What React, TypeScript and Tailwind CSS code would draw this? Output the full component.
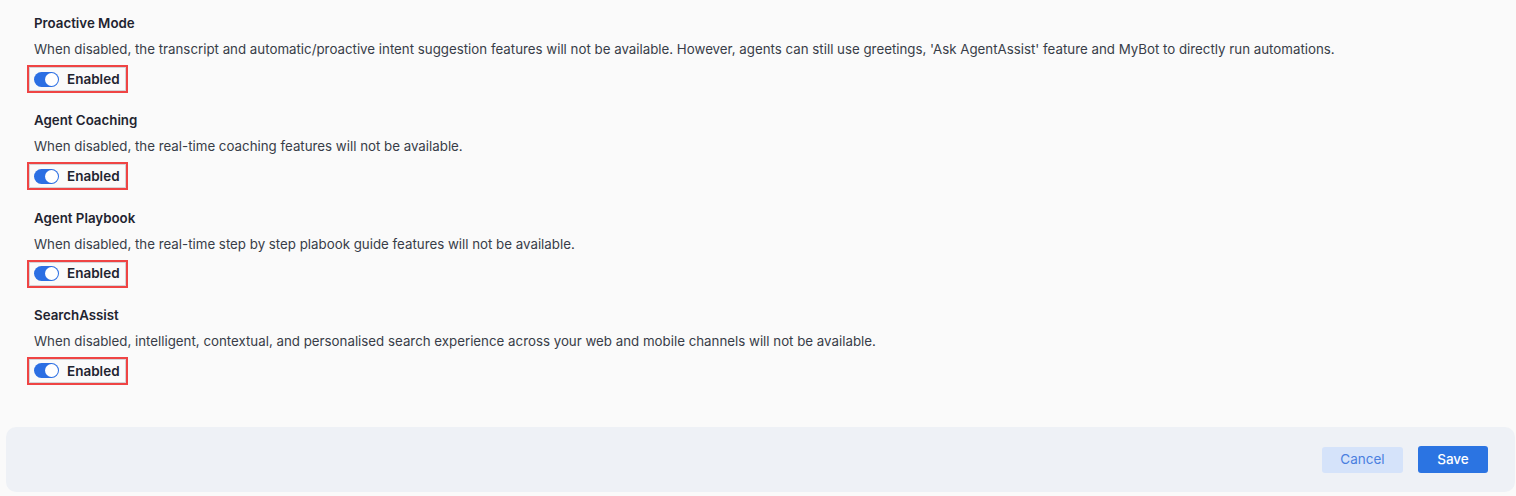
const sections = [
  {
    title: "Proactive Mode",
    text: "When disabled, the transcript and automatic/proactive intent suggestion features will not be available. However, agents can still use greetings, 'Ask AgentAssist' feature and MyBot to directly run automations.",
  },
  {
    title: "Agent Coaching",
    text: "When disabled, the real-time coaching features will not be available.",
  },
  {
    title: "Agent Playbook",
    text: "When disabled, the real-time step by step plabook guide features will not be available.",
  },
  {
    title: "SearchAssist",
    text: "When disabled, intelligent, contextual, and personalised search experience across your web and mobile channels will not be available.",
  },
];

function Toggle() {
  return (
    <div className="inline-flex items-center gap-[8px] border-2 border-[#ef4444] shadow-[inset_0_0_0_1px_#d4d4d8] pl-[5px] pr-[6px] h-[28px]">
      <span className="relative w-[25px] h-[15px] rounded-full bg-[#2c6fe3] flex items-center">
        <span className="absolute right-[1px] w-[13px] h-[13px] rounded-full bg-white"></span>
      </span>
      <span className="text-[13.5px] font-semibold text-[#1f2430]">Enabled</span>
    </div>
  );
}

export default function App() {
  return (
    <div className="w-[1516px] h-[496px] bg-[#fafafa] flex flex-col font-['Inter',sans-serif]">
      <div className="flex flex-col pl-[34px] pt-[15px]">
        {sections.map((s, i) => (
          <div key={i} className="flex flex-col h-[97.3px]">
            <h3 className="text-[13.3px] font-semibold text-[#1f2430] leading-[16px]">{s.title}</h3>
            <p className="text-[13.3px] text-[#383d48] leading-[16px] mt-[10px]">{s.text}</p>
            <div className="mt-[8px] -ml-[7px]">
              <Toggle />
            </div>
          </div>
        ))}
      </div>
      <div className="mt-auto mb-[4px] ml-[6px] mr-[1px] h-[65px] bg-[#eef1f6] rounded-[10px] flex items-center justify-end gap-[15px] pr-[27px]">
        <button className="w-[81px] h-[26px] rounded-[3px] bg-[#d5e3fa] text-[#4a7fdf] text-[13.5px]">Cancel</button>
        <button className="w-[70px] h-[27px] rounded-[3px] bg-[#2b74e2] text-white text-[13.5px] font-medium">Save</button>
      </div>
    </div>
  );
}
